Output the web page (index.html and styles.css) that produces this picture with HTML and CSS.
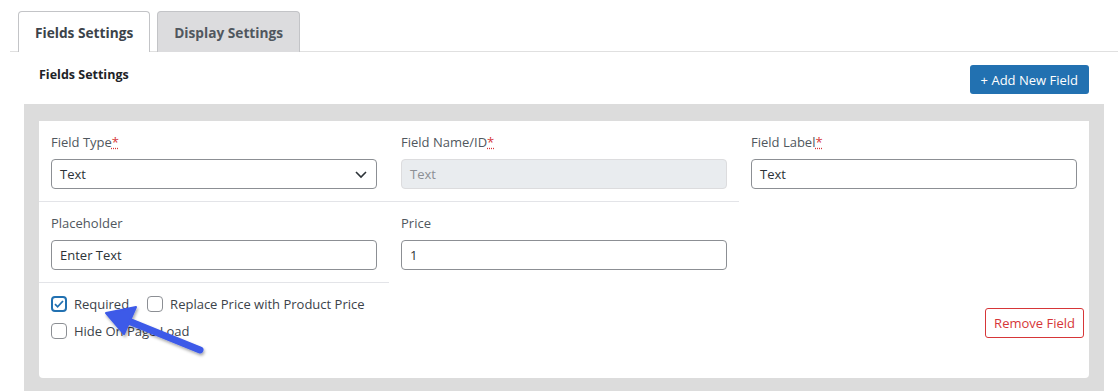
FILE: index.html
```html
<!DOCTYPE html>
<html lang="en">
<head>
    <meta charset="UTF-8">
    <title>Fields Settings</title>
    <link rel="stylesheet" href="styles.css">
</head>
<body>
    <div class="tabs">
        <div class="tab active">Fields Settings</div>
        <div class="tab">Display Settings</div>
    </div>

    <div class="section-head">
        <h2>Fields Settings</h2>
        <button class="btn-primary">+ Add New Field</button>
    </div>

    <div class="fields-wrap">
        <div class="field-card">
            <div class="grid">
                <div class="cell bordered">
                    <label>Field Type<abbr>*</abbr></label>
                    <div class="select">Text
                        <svg width="14" height="14" viewBox="0 0 14 14"><path d="M2 5l5 5 5-5" fill="none" stroke="#2c3338" stroke-width="1.6"/></svg>
                    </div>
                </div>
                <div class="cell bordered">
                    <label>Field Name/ID<abbr>*</abbr></label>
                    <div class="input disabled">Text</div>
                </div>
                <div class="cell">
                    <label>Field Label<abbr>*</abbr></label>
                    <div class="input">Text</div>
                </div>
                <div class="cell bordered">
                    <label>Placeholder</label>
                    <div class="input">Enter Text</div>
                </div>
                <div class="cell">
                    <label>Price</label>
                    <div class="input">1</div>
                </div>
                <div class="cell"></div>
            </div>

            <div class="bottom">
                <div class="checks">
                    <div class="check-row">
                        <span class="check"><span class="box checked"><svg width="12" height="12" viewBox="0 0 12 12"><path d="M2 6.2l2.6 2.6L10 3" fill="none" stroke="#2271b1" stroke-width="1.8"/></svg></span>Required</span>
                        <span class="check"><span class="box"></span>Replace Price with Product Price</span>
                    </div>
                    <div class="check-row">
                        <span class="check"><span class="box"></span>Hide On Page Load</span>
                    </div>
                </div>
                <button class="btn-danger">Remove Field</button>
            </div>
        </div>
    </div>

    <!-- annotation arrow -->
    <svg class="arrow" width="120" height="60" viewBox="0 0 120 60">
        <defs>
            <filter id="sh" x="-20%" y="-20%" width="140%" height="140%">
                <feDropShadow dx="1" dy="2" stdDeviation="1.5" flood-opacity="0.35"/>
            </filter>
        </defs>
        <g filter="url(#sh)" fill="#3d5ae8" stroke="#3d5ae8" stroke-linecap="round" stroke-linejoin="round">
            <line x1="100" y1="47" x2="26" y2="17" stroke-width="7"/>
            <polygon points="6,10 36,4 24,31" stroke-width="2"/>
        </g>
    </svg>
</body>
</html>
```

FILE: styles.css
```css
body {
    margin: 0;
    font-family: "Open Sans", "Noto Sans", sans-serif;
    font-size: 13px;
    color: #3c434a;
    background: #fff;
    width: 1118px;
    height: 391px;
    overflow: hidden;
    position: relative;
}
.tabs {
    display: flex;
    gap: 7px;
    padding: 11px 0 0 8px;
    margin-left: 10px;
    border-bottom: 1px solid #e0e0e0;
    height: 40px;
}
.tab {
    box-sizing: border-box;
    height: 41px;
    padding: 0 16px;
    display: flex;
    align-items: center;
    font-weight: 700;
    font-size: 13.7px;
    color: #50575e;
    background: #dcdcde;
    border: 1px solid #c3c4c7;
    border-bottom: none;
    border-radius: 4px 4px 0 0;
}
.tab.active {
    background: #fff;
    color: #3c434a;
    position: relative;
    z-index: 1;
}
.section-head {
    display: flex;
    justify-content: space-between;
    padding: 0 29px 0 39px;
    height: 52px;
}
.section-head h2 {
    margin: 14px 0 0;
    font-size: 12.5px;
    font-weight: 700;
    color: #1d2327;
}
.btn-primary {
    margin-top: 13px;
    height: 29px;
    padding: 0 11px;
    border: none;
    border-radius: 3px;
    background: #2271b1;
    color: #fff;
    font-family: inherit;
    font-size: 13px;
}
.fields-wrap {
    margin: 0 14px 0 24px;
    background: #dcdcdc;
    padding: 17px 15px 13px;
}
.field-card {
    background: #fff;
    border-radius: 0 0 4px 4px;
    height: 257px;
}
.grid {
    display: grid;
    grid-template-columns: repeat(3, 350px);
}
.cell {
    padding: 12px;
}
.cell.bordered {
    border-bottom: 1px solid #e3e4e8;
}
.cell label {
    display: block;
    font-size: 13px;
    color: #50575e;
    line-height: 18px;
    margin: 0 0 8px;
}
abbr {
    color: #d63638;
    text-decoration: underline dotted #d63638;
}
.input, .select {
    box-sizing: border-box;
    height: 30px;
    border: 1px solid #8c8f94;
    border-radius: 4px;
    padding: 0 8px;
    display: flex;
    align-items: center;
    justify-content: space-between;
    font-size: 13px;
    color: #2c3338;
}
.input.disabled {
    background: #e9ecef;
    border-color: #dcdcde;
    color: #8c8f94;
}
.bottom {
    display: flex;
    justify-content: space-between;
    padding: 12px 5px 0 12px;
}
.check-row {
    display: flex;
    gap: 18px;
    margin-bottom: 9px;
}
.check {
    display: flex;
    align-items: center;
    gap: 7px;
    font-size: 13px;
    color: #3c434a;
    line-height: 18px;
}
.box {
    box-sizing: border-box;
    width: 16px;
    height: 16px;
    border: 1px solid #8c8f94;
    border-radius: 4px;
    display: flex;
    align-items: center;
    justify-content: center;
}
.box.checked {
    border: 2px solid #2271b1;
}
.btn-danger {
    margin-top: 13px;
    height: 30px;
    padding: 0 8px;
    background: #fff;
    border: 1px solid #d63638;
    border-radius: 3px;
    color: #d63638;
    font-family: inherit;
    font-size: 13px;
}
.arrow {
    position: absolute;
    left: 100px;
    top: 303px;
}
```
